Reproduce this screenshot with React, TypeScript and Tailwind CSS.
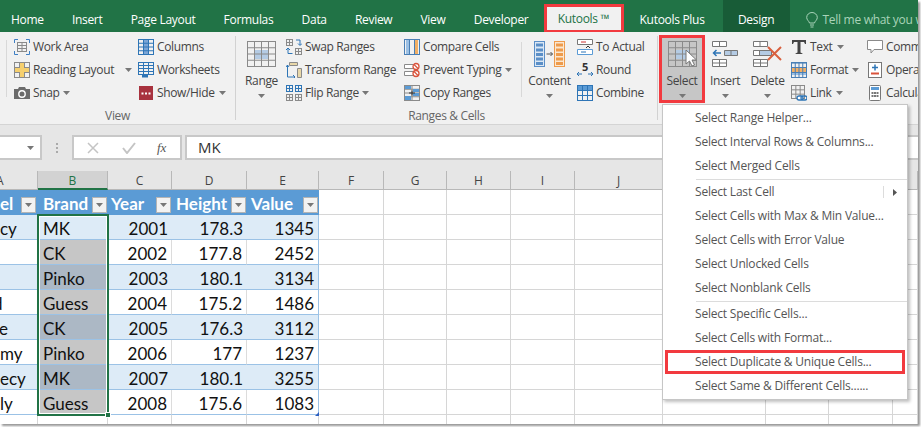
import React from "react";

const Caret = ({ className = "" }: { className?: string }) => (
  <svg width="7" height="4" viewBox="0 0 7 4" className={className}>
    <path d="M0 0h7L3.5 4z" fill="#777" />
  </svg>
);

// plain cell grid, most of the ribbon icons are built on it
const Cells = ({ x, y, w, h, cols, rows, stroke = "#8a8a8a" }: { x: number; y: number; w: number; h: number; cols: number; rows: number; stroke?: string }) => {
  const lines = [];
  for (let i = 1; i < cols; i++) lines.push(`M${x + (w * i) / cols} ${y}V${y + h}`);
  for (let i = 1; i < rows; i++) lines.push(`M${x} ${y + (h * i) / rows}H${x + w}`);
  return (
    <g fill="none" stroke={stroke}>
      <rect x={x} y={y} width={w} height={h} />
      <path d={lines.join("")} />
    </g>
  );
};

const Small = ({ children }: { children: React.ReactNode }) => (
  <svg width="16" height="16" viewBox="0 0 16 16" className="shrink-0">
    {children}
  </svg>
);

const WorkAreaIcon = () => (
  <Small>
    <path d="M.5 4V.5H4M12 .5h3.5V4M.5 12v3.5H4M12 15.500h3.500V12" fill="none" stroke="#3f7fc4" />
    <Cells x={3.5} y={3.5} w={9} h={9} cols={2} rows={3} />
  </Small>
);
const ReadingIcon = () => (
  <Small>
    <Cells x={0.5} y={0.5} w={15} h={15} cols={3} rows={3} />
    <path d="M6 1h4v14H6zM1 6h14v4H1z" fill="#f5cf6e" />
  </Small>
);
const SnapIcon = () => (
  <Small>
    <path d="M0 4h4l1-2h6l1 2h4v10H0z" fill="#6b6b6b" />
    <circle cx="8" cy="9" r="3.200" fill="#6b6b6b" stroke="#fff" strokeWidth="1.400" />
  </Small>
);
const ColumnsIcon = () => (
  <Small>
    <rect x="5" y="0" width="5" height="16" fill="#7ca6d6" />
    <Cells x={0.5} y={0.5} w={15} h={15} cols={3} rows={4} stroke="#2e75b6" />
  </Small>
);
const WorksheetsIcon = () => (
  <Small>
    <Cells x={0.5} y={0.5} w={15} h={12} cols={3} rows={4} stroke="#2e75b6" />
    <path d="M4 13h6v2.500H4z" fill="#2e75b6" />
  </Small>
);
const ShowHideIcon = () => (
  <Small>
    <rect x="1" y="1" width="14" height="14" fill="#a8323e" />
    <path d="M3.500 7.500h2v2h-2zM7 7.500h2v2H7zM10.500 7.500h2v2h-2z" fill="#fff" />
  </Small>
);
const SwapIcon = () => (
  <Small>
    <Cells x={0.5} y={0.5} w={6} h={6} cols={2} rows={2} />
    <Cells x={9.5} y={9.5} w={6} h={6} cols={2} rows={2} />
    <path d="M10 1h4v5M12 4.500l2 2 2-2M6.500 14.500H2V9M0 11l2-2 2 2" fill="none" stroke="#2e75b6" />
  </Small>
);
const TransformIcon = () => (
  <Small>
    <path d="M3.500 .5h8v3h-8z" fill="#e8d7a8" stroke="#8a8a8a" />
    <path d="M11.500 6.500h4v9h-4z" fill="#e8d7a8" stroke="#8a8a8a" />
    <path d="M1.500 3v12H9M0 5l1.500-2L3 5M7 13l2 2-2 2" fill="none" stroke="#2e75b6" />
  </Small>
);
const FlipIcon = () => (
  <Small>
    <Cells x={0.5} y={0.5} w={6} h={6} cols={2} rows={2} stroke="#2e75b6" />
    <Cells x={9.5} y={0.5} w={6} h={6} cols={2} rows={2} stroke="#2e75b6" />
    <Cells x={0.5} y={9.5} w={6} h={6} cols={2} rows={2} />
    <Cells x={9.5} y={9.5} w={6} h={6} cols={2} rows={2} />
  </Small>
);
const CompareIcon = () => (
  <Small>
    <rect x="2" y="1" width="4" height="14" fill="#9cc0e4" />
    <rect x="10" y="1" width="4" height="14" fill="#f2b066" />
    <Cells x={0.5} y={0.5} w={15} h={15} cols={3} rows={1} stroke="#4a7fb5" />
  </Small>
);
const PreventIcon = () => (
  <Small>
    <path d="M.5 2.500h11v4H.5zM.5 9.500h11v4H.5z" fill="#fff" stroke="#8a8a8a" />
    <circle cx="12" cy="4.500" r="3" fill="#fff" stroke="#d9533c" strokeWidth="1.300" />
    <path d="M10 2.500l4 4" stroke="#d9533c" strokeWidth="1.300" />
    <circle cx="12" cy="11.500" r="3" fill="#fff" stroke="#d9533c" strokeWidth="1.300" />
    <path d="M10 9.500l4 4" stroke="#d9533c" strokeWidth="1.300" />
  </Small>
);
const CopyRangesIcon = () => (
  <Small>
    <Cells x={0.5} y={0.5} w={15} h={15} cols={2} rows={4} />
    <path d="M1 1h6v3H1zM9 4h6v3H9zM9 8h6v3H9zM1 11h6v4H1z" fill="#5b9bd5" />
    <path d="M5 8h6M8 5.500v5" stroke="#333" />
  </Small>
);
const ToActualIcon = () => (
  <Small>
    <path d="M.5 .5h15v5H.5z" fill="#fff" stroke="#777" />
    <path d="M4 3h5" stroke="#c33" />
    <path d="M.5 10.500h15v5H.5z" fill="#fff" stroke="#5b9bd5" />
    <path d="M4 13h5" stroke="#2e75b6" />
    <path d="M9 9l2-2 2 2" fill="none" stroke="#333" />
  </Small>
);
const RoundIcon = () => (
  <Small>
    <text x="5" y="9" fontSize="11" fontWeight="700" fontFamily="Open Sans" fill="#333">5</text>
    <path d="M0 12h5M2 10l-2 2 2 2M16 12h-5M14 10l2 2-2 2" fill="none" stroke="#2e75b6" />
  </Small>
);
const CombineIcon = () => (
  <Small>
    <rect x="0" y="0" width="16" height="5" fill="#5b9bd5" />
    <Cells x={0.5} y={0.5} w={15} h={15} cols={3} rows={3} stroke="#2e75b6" />
  </Small>
);
const TextIcon = () => (
  <Small>
    <path d="M1 1h14v4h-1l-1-2H9.500v10.500l2 1v.500h-7v-.500l2-1V3H3L2 5H1z" fill="#444" />
  </Small>
);
const FormatIcon = () => (
  <Small>
    <rect x="1" y="6" width="14" height="4" fill="#f2b066" />
    <rect x="1" y="10" width="14" height="3" fill="#9cc0e4" />
    <rect x="0" y="0" width="16" height="1.500" fill="#2e75b6" />
    <Cells x={0.5} y={0.5} w={15} h={15} cols={4} rows={3} stroke="#4a7fb5" />
  </Small>
);
const LinkIcon = () => (
  <Small>
    <Cells x={0.5} y={0.5} w={13} h={13} cols={3} rows={3} />
    <rect x="6" y="11" width="6" height="4" rx="2" fill="#fff" stroke="#2e75b6" strokeWidth="1.300" />
    <rect x="10" y="11" width="6" height="4" rx="2" fill="none" stroke="#2e75b6" strokeWidth="1.300" />
  </Small>
);
const CommentIcon = () => (
  <Small>
    <path d="M.5 1.500h15v9H7l-3 3.500v-3.500H.5z" fill="#fff" stroke="#8a8a8a" />
  </Small>
);
const OperationIcon = () => (
  <Small>
    <rect x="1.500" y=".5" width="13" height="15" fill="#fff" stroke="#777" />
    <path d="M8 2.500v6M5 5.500h6" stroke="#2e75b6" strokeWidth="1.500" />
    <path d="M4 11.500h8" stroke="#d9533c" strokeWidth="2" />
  </Small>
);
const CalcIcon = () => (
  <Small>
    <rect x="2.500" y=".5" width="11" height="15" rx="1" fill="#fff" stroke="#777" />
    <rect x="4" y="2" width="8" height="3" fill="#5b9bd5" />
    <path d="M4.500 7h2v2h-2zM7 7h2v2H7zM9.500 7h2v2h-2zM4.500 10h2v2h-2zM7 10h2v2H7zM9.500 10h2v2h-2z" fill="#777" />
  </Small>
);

const RangeIcon = ({ cursor }: { cursor?: boolean }) => (
  <svg width="29" height="26" viewBox="0 0 29 26">
    <rect x="7" y="9" width="14" height="9" fill="#b4cbe4" />
    <Cells x={0.5} y={0.5} w={28} h={25} cols={4} rows={4} />
    {cursor && <path d="M18 9v14l3.500-3 2.500 5 2.500-1-2.500-5h4.500z" fill="#fff" stroke="#777" />}
  </svg>
);
const ContentIcon = () => (
  <svg width="31" height="26" viewBox="0 0 31 26">
    <rect x=".5" y=".5" width="10" height="25" fill="#dbe7f4" stroke="#5b8fc7" />
    <path d="M2 2.500h7v3H2zM2 7.500h7v3H2zM2 12h7v3H2zM2 16.500h7v3H2zM2 21h7v3H2z" fill="#5b8fc7" />
    <rect x="20.500" y=".5" width="10" height="25" fill="#fbe7d0" stroke="#ee9b4c" />
    <path d="M22 2.500h7v3h-7zM22 7.500h7v3h-7zM22 12h7v3h-7zM22 16.500h7v3h-7zM22 21h7v3h-7z" fill="#ee9b4c" />
    <path d="M12.500 13h6M16.500 11l2 2-2 2" fill="none" stroke="#555" />
  </svg>
);
const InsertIcon = () => (
  <svg width="26" height="26" viewBox="0 0 26 26">
    <path d="M.5 .5h14v5H.5zM.5 18.500h14v7H.5zM7.500 18.500v7M7.500 .5v5" fill="#fff" stroke="#777" />
    <path d="M.5 22h14" stroke="#777" />
    <path d="M12.500 9.500h13v5h-13zM19 9.500v5" fill="#b4cbe4" stroke="#777" />
    <path d="M1 12h8M4.500 9l-3 3 3 3" fill="none" stroke="#2e75b6" strokeWidth="1.500" />
  </svg>
);
const DeleteIcon = () => (
  <svg width="30" height="26" viewBox="0 0 30 26">
    <path d="M.5 .5h14v5H.5zM.5 18.500h14v7H.5zM7.500 18.500v7M.5 9.500h8v5H.5z" fill="#fff" stroke="#777" />
    <path d="M7 .5v5M.5 22h14" stroke="#777" />
    <rect x="6.500" y="9.500" width="12" height="5" fill="#b4cbe4" stroke="#777" />
    <path d="M15 6l13 13M28 6L15 19" stroke="#d9603f" strokeWidth="2" />
  </svg>
);

const Item = ({ icon, label, caret, gap }: { icon: React.ReactNode; label: string; caret?: boolean; gap?: string }) => (
  <div className="flex h-[23px] items-center gap-[3px] whitespace-nowrap">
    {icon}
    <span>{label}</span>
    {caret && <Caret className={gap ?? "ml-[1px]"} />}
  </div>
);

const Big = ({ icon, label, active, width = "w-[43px]" }: { icon: React.ReactNode; label: string; active?: boolean; width?: string }) => (
  <div className={"mt-[4px] flex h-[66px] shrink-0 flex-col items-center pt-[5px] " + width + (active ? " bg-[#c6c6c6] outline-3 -outline-offset-2 outline-[#f23a3f]" : "")}>
    <div className="flex h-[26px] items-start">{icon}</div>
    <span className="mt-[6px] h-[16px] leading-[16px]">{label}</span>
    <Caret className="mt-[5px]" />
  </div>
);

const Col = ({ children, className }: { children: React.ReactNode; className: string }) => (
  <div className={"flex shrink-0 flex-col pt-[3px] " + className}>{children}</div>
);

const Group = ({ label, width, children }: { label: string; width: string; children: React.ReactNode }) => (
  <div className={"mt-[4px] flex h-[84px] shrink-0 flex-col border-r border-[#d2d2d2] " + width}>
    <div className="-mt-[4px] flex h-[76px] shrink-0">{children}</div>
    <div className="h-[16px] shrink-0 text-center leading-[16px] text-[#666]">{label}</div>
  </div>
);

const tabs = ["Home", "Insert", "Page Layout", "Formulas", "Data", "Review", "View", "Developer"];

const TabBar = () => (
  <div className="flex h-[32px] whitespace-nowrap bg-[#217346] text-[12px] tracking-[-0.3px] text-white">
    {tabs.map((t) => (
      <div key={t} className="flex items-center px-[14.1px] pt-[7px] first:pl-[11px]">
        {t}
      </div>
    ))}
    <div className="mt-[4px] ml-[1px] flex h-[29px] w-[80px] shrink-0 items-center justify-center border-[3px] border-[#f23a3f] bg-[#f1f1f1] pt-[1px] text-[#217346]">
      Kutools ™
    </div>
    <div className="flex items-center pt-[7px] pl-[16px] pr-[18px]">Kutools Plus</div>
    <div className="flex w-[67px] shrink-0 items-center justify-center bg-[#185c37] pt-[7px]">Design</div>
    <div className="flex items-center gap-[5px] pt-[7px] pl-[16px] text-[#a9d3b9]">
      <svg width="12" height="16" viewBox="0 0 12 16" fill="none" stroke="#a9d3b9">
        <path d="M3.500 11C3 9 .7 8 .7 5.500a5.300 5 0 0 1 10.600 0C11.300 8 9 9 8.500 11zM4 13h4M4.500 15h3" />
      </svg>
      Tell me what you want to do
    </div>
  </div>
);

const Ribbon = () => (
  <div className="flex h-[93px] border-b border-[#d4d4d4] bg-[#f1f1f1] text-[12px] tracking-[-0.35px] text-[#444]">
    <Group label="View" width="w-[236px]">
      <div className="mt-[8px] mr-[7px] ml-[6px] h-[57px] w-px bg-[#d8d8d8]" />
      <Col className="w-[124px]">
        <Item icon={<WorkAreaIcon />} label="Work Area" />
        <Item icon={<ReadingIcon />} label="Reading Layout" caret gap="ml-[8px]" />
        <Item icon={<SnapIcon />} label="Snap" caret gap="ml-0" />
      </Col>
      <Col className="w-[90px]">
        <Item icon={<ColumnsIcon />} label="Columns" />
        <Item icon={<WorksheetsIcon />} label="Worksheets" />
        <Item icon={<ShowHideIcon />} label="Show/Hide" caret />
      </Col>
    </Group>
    <Group label="Ranges & Cells" width="w-[422px]">
      <div className="ml-[4px]">
        <Big icon={<RangeIcon />} label="Range" />
      </div>
      <Col className="ml-[3px] w-[118px]">
        <Item icon={<SwapIcon />} label="Swap Ranges" />
        <Item icon={<TransformIcon />} label="Transform Range" />
        <Item icon={<FlipIcon />} label="Flip Range" caret gap="ml-0" />
      </Col>
      <Col className="w-[117px]">
        <Item icon={<CompareIcon />} label="Compare Cells" />
        <Item icon={<PreventIcon />} label="Prevent Typing" caret />
        <Item icon={<CopyRangesIcon />} label="Copy Ranges" />
      </Col>
      <div className="mt-[10px] h-[55px] w-px bg-[#d8d8d8]" />
      <div className="ml-[6px]">
        <Big icon={<ContentIcon />} label="Content" />
      </div>
      <Col className="ml-[6px]">
        <Item icon={<ToActualIcon />} label="To Actual" />
        <Item icon={<RoundIcon />} label="Round" />
        <Item icon={<CombineIcon />} label="Combine" />
      </Col>
    </Group>
    <div className="ml-[2px] flex h-[76px]">
      <Big active width="w-[44px]" icon={<RangeIcon cursor />} label="Select" />
      <Big width="w-[42px]" icon={<InsertIcon />} label="Insert" />
      <Big icon={<DeleteIcon />} label="Delete" />
      <Col className="ml-[2px] w-[76px]">
        <Item icon={<TextIcon />} label="Text" caret />
        <Item icon={<FormatIcon />} label="Format" caret />
        <Item icon={<LinkIcon />} label="Link" caret />
      </Col>
      <Col className="w-[90px]">
        <Item icon={<CommentIcon />} label="Comment" />
        <Item icon={<OperationIcon />} label="Operation" />
        <Item icon={<CalcIcon />} label="Calculator" />
      </Col>
    </div>
  </div>
);

const FormulaBar = () => (
  <div className="flex h-[46px] items-start bg-[#e6e6e6] pt-[10px]">
    <div className="flex h-[25px] w-[42px] items-center justify-end border-2 border-l-0 border-[#c8c8c8] bg-white pr-[6px]">
      <Caret />
    </div>
    <div className="mx-[14px] flex h-[25px] w-[2px] flex-col items-center justify-center gap-[2px]">
      <div className="h-[2px] w-[2px] bg-[#aaa]" />
      <div className="h-[2px] w-[2px] bg-[#aaa]" />
      <div className="h-[2px] w-[2px] bg-[#aaa]" />
    </div>
    <div className="flex h-[25px] w-[110px] items-center border-2 border-[#c8c8c8] bg-white pl-[13px]">
      <svg width="12" height="12" viewBox="0 0 12 12">
        <path d="M1 1l10 10M11 1L1 11" stroke="#c4c4c4" strokeWidth="1.500" />
      </svg>
      <svg width="14" height="12" viewBox="0 0 14 12" className="ml-[23px]">
        <path d="M1 6l4 5 8-10" fill="none" stroke="#c4c4c4" strokeWidth="2" />
      </svg>
      <span className="ml-[21px] text-[13px] italic text-[#555]" style={{ fontFamily: "'Liberation Serif', serif" }}>
        fx
      </span>
    </div>
    <div className="ml-[3px] flex h-[25px] flex-1 items-center border-2 border-r-0 border-[#c8c8c8] bg-white pl-[11px] text-[15px] text-[#333]">
      MK
    </div>
  </div>
);

const Filter = () => (
  <div className="mt-[3px] flex h-[16px] w-[15px] shrink-0 items-center justify-center border border-[#b4b4b4] bg-[#f2f2f2]">
    <Caret />
  </div>
);

const letters = ["A", "B", "C", "D", "E", "F", "G", "H", "I", "J", "", "", "", ""];

const rows: [string, string, string, string, string, string][] = [
  ["cy", "MK", "2001", "178.3", "1345", "bg-[#ddebf7]"],
  ["", "CK", "2002", "177.8", "2452", "bg-[#c6c6c6]"],
  ["", "Pinko", "2003", "180.1", "3134", "bg-[#acb8c5]"],
  ["d", "Guess", "2004", "175.2", "1486", "bg-[#c6c6c6]"],
  ["e", "CK", "2005", "176.3", "3112", "bg-[#acb8c5]"],
  ["my", "Pinko", "2006", "177", "1237", "bg-[#c6c6c6]"],
  ["ecy", "MK", "2007", "180.1", "3255", "bg-[#acb8c5]"],
  ["ly", "Guess", "2008", "175.6", "1083", "bg-[#c6c6c6]"],
];

const Sheet = () => (
  <div className="relative flex-1 overflow-hidden">
    <div className="grid grid-cols-[38px_70px_64px_75px_72px_65px_63px_64px_64px_88px_103px_63px_64px_25px] grid-rows-[19px] auto-rows-[25px] text-[17px] leading-[27px] text-[#111]" style={{ fontFamily: "Lato, sans-serif" }}>
      {letters.map((l, i) => (
        <div
          key={i}
          className={
            "flex items-center overflow-hidden border-r border-[#b8b8b8] pt-[1px] text-[12px] " +
            (i === 0 ? "justify-start -indent-[4px] " : "justify-center ") +
            (i === 1 ? "border-b-2 border-b-[#217346] bg-[#d2d2d2] text-[#217346]" : "border-b border-b-[#b8b8b8] bg-[#e6e6e6] text-[#444]")
          }
          style={{ fontFamily: "'Open Sans', sans-serif" }}
        >
          {l}
        </div>
      ))}

      {[
        ["el", "pr-[2px]"],
        ["Brand", "pl-[5px] pr-[1px]"],
        ["Year", "pl-[3px] pr-[1px]"],
        ["Height", "pl-[4px] pr-[1px]"],
        ["Value", "pl-[4px] pr-[1px]"],
      ].map(([t, pad]) => (
        <div key={t} className={"flex items-center justify-between bg-[#5b9bd5] pt-[1px] font-bold text-white " + pad}>
          {t}
          <Filter />
        </div>
      ))}
      {Array.from({ length: 9 }).map((_, i) => (
        <div key={i} className="border-r border-b border-[#d6d6d6]" />
      ))}

      {rows.map((r, i) => {
        const band = i % 2 === 0;
        const base = "border-b border-[#9bc2e6] " + (band ? "bg-[#ddebf7] " : "bg-white border-r border-r-[#dcdcdc] ");
        return (
          <React.Fragment key={i}>
            <div className={"overflow-hidden border-b border-[#9bc2e6] " + (band ? "bg-[#ddebf7] " : "bg-white ") + (r[0] === "d" ? "-indent-[7px]" : r[0] === "e" ? "-indent-[1px]" : "")}>{r[0]}</div>
            <div className={"border-b border-[#9bc2e6] pl-[5px] " + r[5]}>{r[1]}</div>
            <div className={base + "pr-[4px] text-right"}>{r[2]}</div>
            <div className={base + "pr-[4px] text-right"}>{r[3]}</div>
            <div className={"border-b border-r border-[#9bc2e6] pr-[4px] text-right " + (band ? "bg-[#ddebf7]" : "bg-white")}>{r[4]}</div>
            {Array.from({ length: 9 }).map((_, j) => (
              <div key={j} className="border-r border-b border-[#d6d6d6]" />
            ))}
          </React.Fragment>
        );
      })}
      {Array.from({ length: 14 }).map((_, j) => (
        <div key={j} className="border-r border-b border-[#d6d6d6]" />
      ))}
    </div>
    {/* selection box on B */}
    <div className="absolute top-[43px] left-[37px] h-[202px] w-[72px] border-2 border-[#217346] outline outline-1 -outline-offset-3 outline-white">
      <div className="absolute -right-[4px] -bottom-[4px] h-[6px] w-[6px] border border-white bg-[#217346]" />
    </div>
    <svg width="4" height="4" viewBox="0 0 4 4" className="absolute top-[241px] left-[315px]">
      <path d="M4 0v4H0z" fill="#2e5fc0" />
    </svg>
  </div>
);

const menu: (string | null)[] = [
  "Select Range Helper...",
  "Select Interval Rows & Columns...",
  "Select Merged Cells",
  null,
  "Select Last Cell",
  "Select Cells with Max & Min Value...",
  "Select Cells with Error Value",
  "Select Unlocked Cells",
  "Select Nonblank Cells",
  null,
  "Select Specific Cells...",
  "Select Cells with Format...",
  "Select Duplicate & Unique Cells...",
  "Select Same & Different Cells......",
];

const Menu = () => (
  <div className="absolute top-[104px] left-[662px] w-[246px] border border-[#c6c6c6] bg-white py-[1px] text-[12px] tracking-[-0.2px] text-[#555] shadow-[2px_2px_3px_rgba(0,0,0,0.25)]">
    {menu.map((m, i) =>
      m === null ? (
        <div key={i} className="my-[0.5px] ml-[33px] h-px bg-[#dcdcdc]" />
      ) : (
        <div
          key={i}
          className={
            "relative flex h-[24px] items-center whitespace-nowrap " +
            (m.startsWith("Select Duplicate") ? "mx-[2px] pl-[30px] outline-3 -outline-offset-3 outline-[#f23a3f]" : "pl-[32px]")
          }
        >
          {m}
          {m === "Select Last Cell" && (
            <div className="ml-auto flex h-[12px] items-center border-l border-[#dcdcdc] pl-[9px] pr-[10px]">
              <svg width="4" height="7" viewBox="0 0 4 7">
                <path d="M0 0l4 3.500L0 7z" fill="#555" />
              </svg>
            </div>
          )}
        </div>
      )
    )}
  </div>
);

export default function App() {
  return (
    <div className="h-[427px] w-[921px] overflow-hidden bg-white" style={{ fontFamily: "'Open Sans', sans-serif" }}>
      <div className="relative flex h-[424px] w-[918px] flex-col overflow-hidden bg-white shadow-[2px_2px_2px_#999]">
        <TabBar />
        <Ribbon />
        <FormulaBar />
        <Sheet />
        <Menu />
      </div>
    </div>
  );
}
